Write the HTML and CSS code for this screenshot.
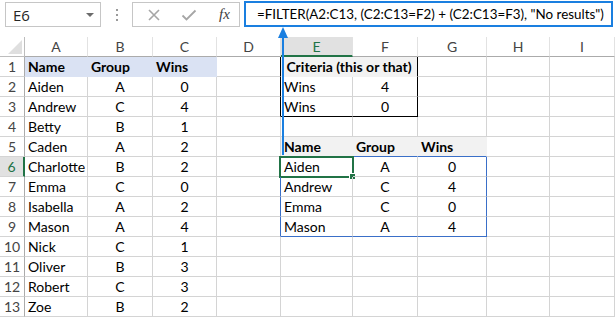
FILE: index.html
```html
<!DOCTYPE html>
<html>
<head>
<meta charset="utf-8">
<link rel="stylesheet" href="styles.css">
</head>
<body>
<div class="app">
  <div class="bar">
    <div class="namebox"><span class="nb-text">E6</span><span class="nb-arrow"></span></div>
    <div class="dots"><span></span><span></span><span></span></div>
    <div class="fxbox">
      <svg class="ic" width="14" height="14" viewBox="0 0 14 14"><path d="M2 2 L12 12 M12 2 L2 12" stroke="#a6a6a6" stroke-width="1.6" fill="none"/></svg>
      <svg class="ic" width="16" height="14" viewBox="0 0 16 14"><path d="M1.5 7.5 L5.5 11.5 L14.5 2.5" stroke="#a6a6a6" stroke-width="1.8" fill="none"/></svg>
      <span class="fx">fx</span>
    </div>
    <div class="formula">=FILTER(A2:C13, (C2:C13=F2) + (C2:C13=F3), "No results")</div>
  </div>

  <div class="sheet">
    <div class="c corner"><span class="tri"></span></div>
    <div class="c ch">A</div><div class="c ch">B</div><div class="c ch">C</div><div class="c ch">D</div>
    <div class="c ch ch-sel">E</div><div class="c ch">F</div><div class="c ch">G</div><div class="c ch">H</div><div class="c ch">I</div>

    <div class="c rh">1</div>
    <div class="c b fb">Name</div><div class="c b fb">Group</div><div class="c b fb">Wins</div>
    <div class="c bk-r"></div>
    <div class="c b fg ctr span2 bk-r">Criteria (this or that)</div>
    <div class="c"></div><div class="c"></div><div class="c"></div>

    <div class="c rh">2</div>
    <div class="c">Aiden</div><div class="c ctr">A</div><div class="c ctr">0</div>
    <div class="c bk-r"></div>
    <div class="c">Wins</div><div class="c ctr bk-r">4</div>
    <div class="c"></div><div class="c"></div><div class="c"></div>

    <div class="c rh">3</div>
    <div class="c">Andrew</div><div class="c ctr">C</div><div class="c ctr">4</div>
    <div class="c bk-r"></div>
    <div class="c bk-b">Wins</div><div class="c ctr bk-r bk-b">0</div>
    <div class="c"></div><div class="c"></div><div class="c"></div>

    <div class="c rh">4</div>
    <div class="c">Betty</div><div class="c ctr">B</div><div class="c ctr">1</div>
    <div class="c"></div><div class="c"></div><div class="c"></div><div class="c"></div><div class="c"></div><div class="c"></div>

    <div class="c rh">5</div>
    <div class="c">Caden</div><div class="c ctr">A</div><div class="c ctr">2</div>
    <div class="c"></div>
    <div class="c b fg bl-b">Name</div><div class="c b fg bl-b">Group</div><div class="c b fg bl-b">Wins</div>
    <div class="c"></div><div class="c"></div>

    <div class="c rh rh-sel">6</div>
    <div class="c">Charlotte</div><div class="c ctr">B</div><div class="c ctr">2</div>
    <div class="c bl-r"></div>
    <div class="c sel">Aiden</div><div class="c ctr">A</div><div class="c ctr bl-r">0</div>
    <div class="c"></div><div class="c"></div>

    <div class="c rh">7</div>
    <div class="c">Emma</div><div class="c ctr">C</div><div class="c ctr">0</div>
    <div class="c bl-r"></div>
    <div class="c">Andrew</div><div class="c ctr">C</div><div class="c ctr bl-r">4</div>
    <div class="c"></div><div class="c"></div>

    <div class="c rh">8</div>
    <div class="c">Isabella</div><div class="c ctr">A</div><div class="c ctr">2</div>
    <div class="c bl-r"></div>
    <div class="c">Emma</div><div class="c ctr">C</div><div class="c ctr bl-r">0</div>
    <div class="c"></div><div class="c"></div>

    <div class="c rh">9</div>
    <div class="c">Mason</div><div class="c ctr">A</div><div class="c ctr">4</div>
    <div class="c bl-r"></div>
    <div class="c bl-b">Mason</div><div class="c ctr bl-b">A</div><div class="c ctr bl-r bl-b">4</div>
    <div class="c"></div><div class="c"></div>

    <div class="c rh">10</div>
    <div class="c">Nick</div><div class="c ctr">C</div><div class="c ctr">1</div>
    <div class="c"></div><div class="c"></div><div class="c"></div><div class="c"></div><div class="c"></div><div class="c"></div>

    <div class="c rh">11</div>
    <div class="c">Oliver</div><div class="c ctr">B</div><div class="c ctr">3</div>
    <div class="c"></div><div class="c"></div><div class="c"></div><div class="c"></div><div class="c"></div><div class="c"></div>

    <div class="c rh">12</div>
    <div class="c">Robert</div><div class="c ctr">C</div><div class="c ctr">3</div>
    <div class="c"></div><div class="c"></div><div class="c"></div><div class="c"></div><div class="c"></div><div class="c"></div>

    <div class="c rh">13</div>
    <div class="c">Zoe</div><div class="c ctr">B</div><div class="c ctr">2</div>
    <div class="c"></div><div class="c"></div><div class="c"></div><div class="c"></div><div class="c"></div><div class="c"></div>
  </div>

  <svg class="arrow" width="12" height="130" viewBox="0 0 12 130">
    <path d="M6 8 L6 128" stroke="#1a7fe0" stroke-width="2" fill="none"/>
    <path d="M6 0 L1 11 L11 11 Z" fill="#1a7fe0"/>
  </svg>
</div>
</body>
</html>
```

FILE: styles.css
```css
html, body {
  margin: 0;
  padding: 0;
  background: #ffffff;
}

.app {
  position: relative;
  width: 615px;
  height: 318px;
  overflow: hidden;
  font-family: Lato, "Noto Sans", sans-serif;
  color: #000;
}

.bar {
  display: flex;
  align-items: flex-start;
  height: 37px;
  padding-top: 1px;
  box-sizing: border-box;
}

.namebox {
  margin-left: 5px;
  margin-top: 1px;
  width: 96px;
  height: 25px;
  box-sizing: border-box;
  border: 1px solid #c6c6c6;
  display: flex;
  align-items: center;
  justify-content: space-between;
  padding: 0 6px 0 7px;
  font-family: "Open Sans", sans-serif;
  font-size: 15px;
  color: #262626;
}

.nb-arrow {
  width: 0;
  height: 0;
  border-left: 4px solid transparent;
  border-right: 4px solid transparent;
  border-top: 4px solid #6b6b6b;
}

.dots {
  width: 31px;
  height: 25px;
  margin-top: 1px;
  display: flex;
  flex-direction: column;
  align-items: center;
  justify-content: center;
  gap: 3px;
}

.dots span {
  width: 2px;
  height: 2px;
  background: #9a9a9a;
}

.fxbox {
  width: 108px;
  height: 25px;
  margin-top: 1px;
  box-sizing: border-box;
  border: 1px solid #c6c6c6;
  display: flex;
  align-items: center;
  padding-left: 14px;
  gap: 20px;
}

.fx {
  font-family: "Liberation Serif", serif;
  font-style: italic;
  font-size: 15px;
  color: #404040;
  margin-left: 2px;
}

.formula {
  margin-left: 4px;
  width: 369px;
  height: 26px;
  box-sizing: border-box;
  border: 2px solid #1a7fe0;
  padding-left: 11px;
  font-size: 13.4px;
  line-height: 22px;
  white-space: nowrap;
  color: #000;
}

.sheet {
  display: grid;
  grid-template-columns: 25px 63px 65px 64px 64px 72px 65px 69px 63px 65px;
  grid-auto-rows: 20px;
}

.c {
  position: relative;
  box-sizing: border-box;
  border-right: 1px solid #d4d4d4;
  border-bottom: 1px solid #d4d4d4;
  padding: 0 3px;
  font-size: 14px;
  line-height: 20px;
  white-space: nowrap;
}

.ctr { text-align: center; }
.b { font-weight: bold; }

.corner {
  border-right-color: #bdbdbd;
  border-bottom-color: #bdbdbd;
}

.tri {
  position: absolute;
  right: 2px;
  bottom: 2px;
  width: 0;
  height: 0;
  border-left: 14px solid transparent;
  border-bottom: 14px solid #dfdfdf;
}

.ch {
  text-align: center;
  color: #444;
  border-right-color: #e2e2e2;
  border-bottom-color: #ababab;
}

.ch-sel {
  background: #e1e1e1;
  color: #217346;
  border-bottom: 2px solid #217346;
}

.rh {
  text-align: center;
  color: #444;
  padding: 0;
  border-right-color: #ababab;
}

.rh-sel {
  background: #e1e1e1;
  color: #217346;
  border-right: 2px solid #217346;
}

.fb {
  background: #dae2f3;
  border-right-color: #dae2f3;
  border-bottom-color: #dae2f3;
}

.fg {
  background: #f2f2f2;
  border-right-color: #f2f2f2;
  border-bottom-color: #f2f2f2;
}

.span2 { grid-column: span 2; }

.bk-r { border-right-color: #000; }
.bk-b { border-bottom-color: #000; }
.bl-r { border-right-color: #3a6fc8; }
.bl-b { border-bottom-color: #3a6fc8; }

.sel::before {
  content: "";
  position: absolute;
  left: -2px;
  top: -1px;
  right: -2px;
  bottom: -2px;
  border: 2px solid #217346;
}

.sel::after {
  content: "";
  position: absolute;
  right: -4px;
  bottom: -4px;
  width: 5px;
  height: 5px;
  background: #217346;
  border: 1px solid #fff;
}

.arrow {
  position: absolute;
  left: 277px;
  top: 27px;
}
```
